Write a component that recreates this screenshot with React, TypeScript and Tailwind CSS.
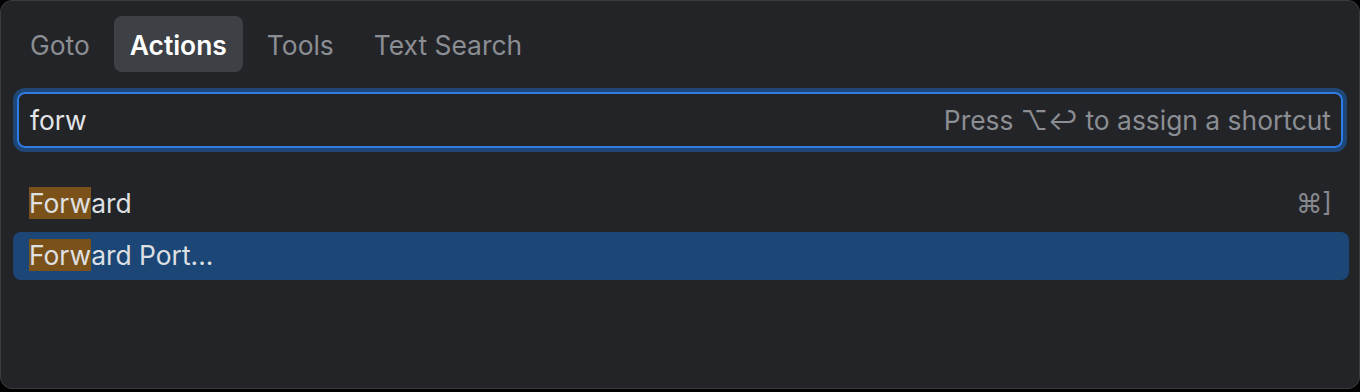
const tabs = ["Goto", "Actions", "Tools", "Text Search"];

type Item = { label: string; match: number; shortcut?: string };

const items: Item[] = [
  { label: "Forward", match: 4, shortcut: "⌘]" },
  { label: "Forward Port...", match: 4 },
];

export default function App() {
  const active = "Actions";
  const selected = 1;

  return (
    <div className="h-[392px] w-[1360px] bg-black font-['Inter',sans-serif]">
      <div className="flex h-[389px] flex-col rounded-[12px] border border-[#3b3c40] bg-[#232428]">
        <div className="flex gap-[8px] pl-[13px] pt-[15px]">
          {tabs.map((t) => (
            <div
              key={t}
              className={
                t === active
                  ? "flex h-[56px] items-center rounded-[8px] bg-[#3d4044] px-4 pt-[3px] text-[26.4px] font-semibold text-white"
                  : "flex h-[56px] items-center rounded-[8px] px-4 pt-[3px] text-[26.4px] text-[#8b8e93]"
              }
            >
              {t}
            </div>
          ))}
        </div>

        <div className="mx-4 mt-[20px] flex h-[56px] items-center justify-between rounded-[8px] border-2 border-[#2f7de3] pl-[11px] pr-[10px] pt-[1px] ring-4 ring-[#1e4677]">
          <span className="text-[26.4px] text-[#e4e5e8]">forw</span>
          <span className="text-[26.4px] text-[#8b8e93]">Press ⌥↩ to assign a shortcut</span>
        </div>

        <div className="ml-3 mr-[10px] mt-[32px] flex flex-col gap-[4px]">
          {items.map((it, i) => (
            <div
              key={it.label}
              className={
                i === selected
                  ? "flex h-[48px] items-center justify-between rounded-[8px] bg-[#1b4676] pl-[16px] pr-[17px]"
                  : "flex h-[48px] items-center justify-between rounded-[8px] pl-[16px] pr-[17px]"
              }
            >
              <span className="text-[26.4px] text-[#dfe0e3]">
                <span className="inline-block bg-[#7a5118] leading-[32px]">{it.label.slice(0, it.match)}</span>
                {it.label.slice(it.match)}
              </span>
              {it.shortcut && <span className="text-[26.4px] text-[#84878c]">{it.shortcut}</span>}
            </div>
          ))}
        </div>
      </div>
    </div>
  );
}
